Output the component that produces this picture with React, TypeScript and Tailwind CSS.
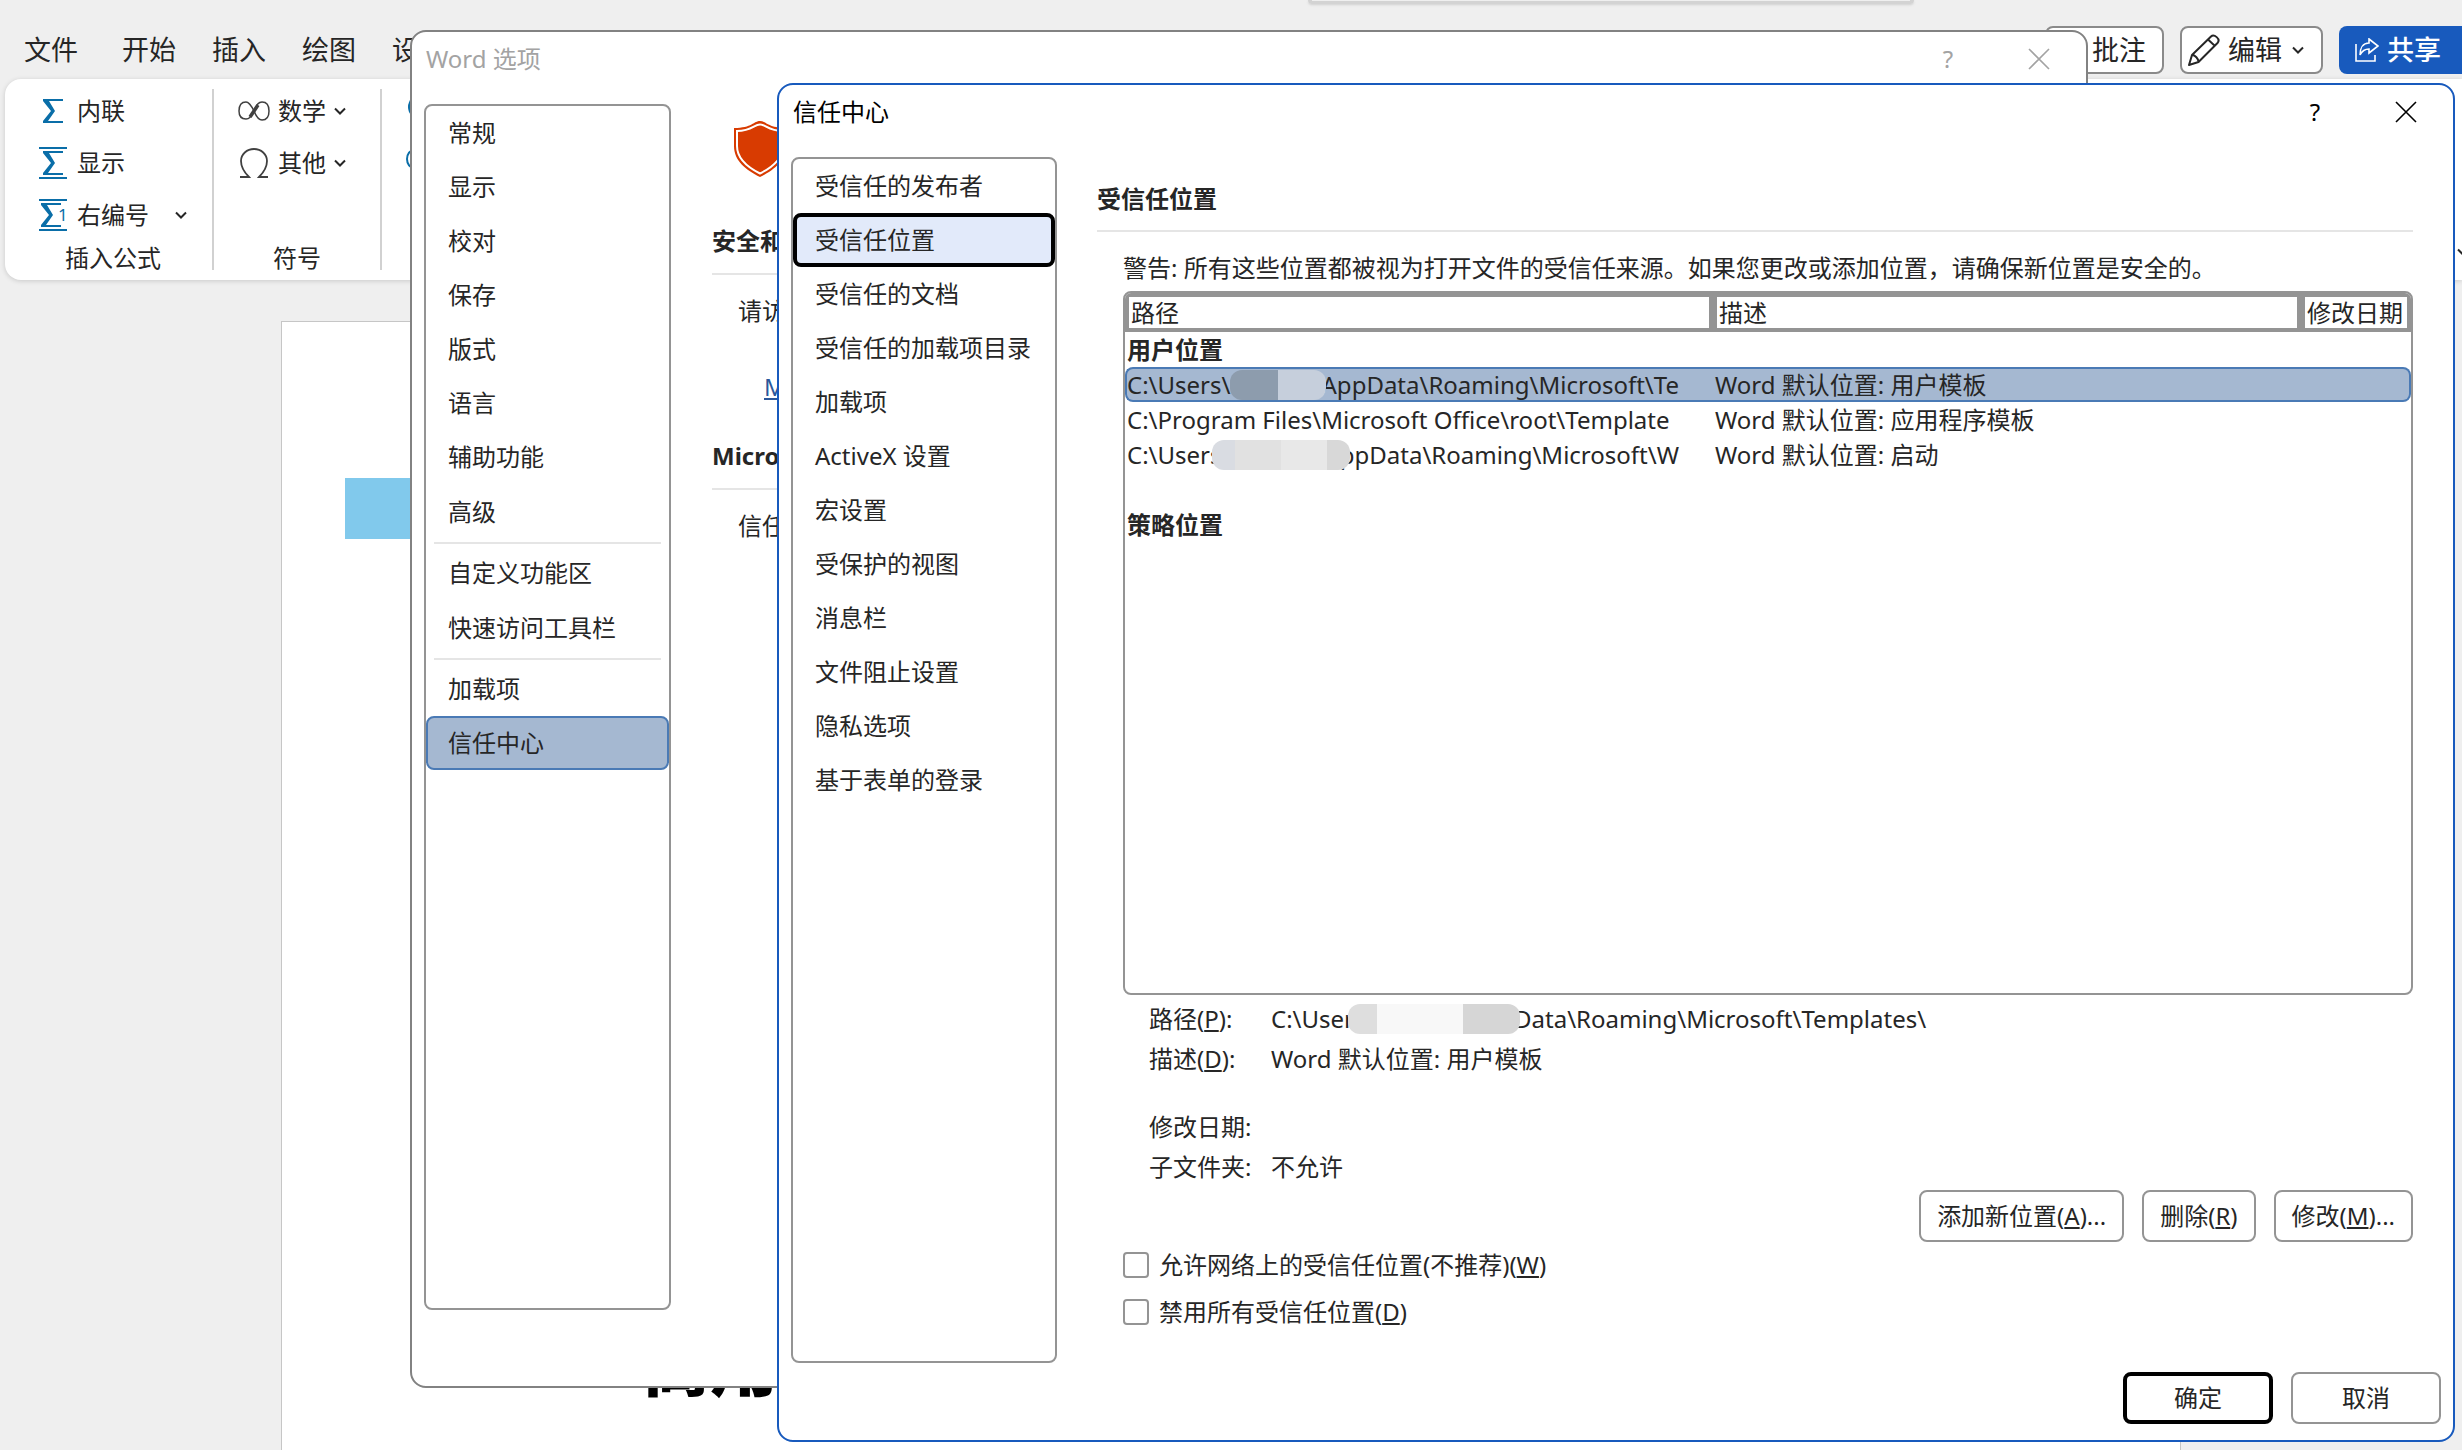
import { useState, type ReactNode } from 'react';

interface NavItem {
  label: string;
  tall?: boolean;
  ruleAfter?: boolean;
}

interface Location {
  head: string;
  tail: string;
  mask: string[];
  maskClass: string;
  description: string;
}

const MENU = ['文件', '开始', '插入', '绘图', '设计'];

const OPTION_NAV: NavItem[] = [
  { label: '常规' },
  { label: '显示' },
  { label: '校对' },
  { label: '保存' },
  { label: '版式' },
  { label: '语言' },
  { label: '辅助功能' },
  { label: '高级', tall: true, ruleAfter: true },
  { label: '自定义功能区' },
  { label: '快速访问工具栏', tall: true, ruleAfter: true },
  { label: '加载项' },
  { label: '信任中心' },
];

const TRUST_NAV = [
  '受信任的发布者', '受信任位置', '受信任的文档', '受信任的加载项目录', '加载项', 'ActiveX 设置',
  '宏设置', '受保护的视图', '消息栏', '文件阻止设置', '隐私选项', '基于表单的登录',
];

const LOCATIONS: Location[] = [
  { head: 'C:\\Users\\', tail: 'AppData\\Roaming\\Microsoft\\Te', mask: ['bg-[#8d9cad]', 'bg-[#c6cfdc]'], maskClass: '-mr-1', description: 'Word 默认位置: 用户模板' },
  { head: 'C:\\Program Files\\Microsoft Office\\root\\Template', tail: '', mask: [], maskClass: '', description: 'Word 默认位置: 应用程序模板' },
  { head: 'C:\\Users', tail: 'ppData\\Roaming\\Microsoft\\W', mask: ['bg-[#d9dce2]', 'bg-[#e1e1e1]', 'bg-[#e1e1e1]', 'bg-[#e8e8e8]', 'bg-[#e8e8e8]', 'bg-[#d8d8d8]'], maskClass: '-ml-[10px] -mr-[10px]', description: 'Word 默认位置: 启动' },
];

function Chevron({ className = '' }: { className?: string }) {
  return (
    <svg viewBox="0 0 12 8" className={`w-3 h-2 shrink-0 ${className}`} fill="none" stroke="#262626" strokeWidth="2">
      <path d="M1 1.5l5 5 5-5" />
    </svg>
  );
}

function Sigma({ framed, numbered }: { framed?: boolean; numbered?: boolean }) {
  return (
    <svg viewBox="0 0 28 32" className="w-7 h-8 shrink-0" fill="#0a6ea8">
      <path transform={numbered ? 'translate(2 4)' : 'translate(4 4)'} d="M0 0H20V2H6L12 12L5 22H20V24H0V22L8 12L0 2Z" />
      {framed && <path d="M0 0H28V2H0ZM0 30H28V32H0Z" />}
      {numbered && <text x="19" y="22" fontSize="17" fontFamily="Noto Sans">1</text>}
    </svg>
  );
}

function Infinity() {
  return (
    <svg viewBox="0 0 32 20" className="w-8 h-5 shrink-0" fill="none" stroke="#404040" strokeWidth="1.5">
      <path d="M16 10C13 4 11 1 8 1C3 1 1 5 1 10C1 15 3 18 8 18C12 18 13 15 16 10C19 4 20 1 24 1C29 1 31 5 31 10C31 15 29 19 24 19C20 19 18 15 16 10Z" />
      <path d="M12 16L20 4" strokeWidth="3.5" />
    </svg>
  );
}

function Omega() {
  return (
    <svg viewBox="0 0 32 30" className="w-8 h-[30px] shrink-0" fill="none" stroke="#404040" strokeWidth="1.8">
      <path d="M2 29H11C6 24 3 19 3 13A13 12 0 0 1 29 13C29 19 26 24 21 29H30" />
    </svg>
  );
}

function Pencil() {
  return (
    <svg viewBox="0 0 32 32" className="w-8 h-8" fill="none" stroke="#262626" strokeWidth="2" strokeLinejoin="round">
      <path d="M1 31L4 21L23 2.5C26-.5 33 5 29.500 9L10.500 28ZM4 21C7 21 10.500 24.500 10.500 28M20 5.500L27 12" />
    </svg>
  );
}

function ShareIcon() {
  return (
    <svg viewBox="0 0 24 24" className="w-6 h-6" fill="none" stroke="white" strokeWidth="1.6">
      <path d="M1 6V23H20V17" />
      <path d="M14 1L23 8L14 15V11C9 11 7 13 5 17C5 10 8 5 14 5Z" />
    </svg>
  );
}

function Shield() {
  return (
    <svg viewBox="0 0 52 56" className="w-[52px] h-14">
      <path fill="#d83b01" d="M26 0C32 0 34 7 52 7V25C52 40 40 49 26 56C12 49 0 40 0 25V7C18 7 20 0 26 0Z" />
      <path fill="#d83b01" stroke="white" strokeWidth="2" d="M26 3.500C32 3.500 34 10 49 10V25C49 38 39 46 26 52.500C13 46 3 38 3 25V10C18 10 20 3.500 26 3.500Z" />
    </svg>
  );
}

function CloseIcon() {
  return (
    <svg viewBox="0 0 22 22" className="w-[22px] h-[22px]" fill="none" stroke="currentColor" strokeWidth="1.6">
      <path d="M1 1L21 21M21 1L1 21" />
    </svg>
  );
}

function TitleBar({ title, className }: { title: string; className: string }) {
  return (
    <div className={`flex items-center h-[54px] pl-[14px] pr-9 shrink-0 ${className}`}>
      <h1>{title}</h1>
      <button aria-label="帮助" className="ml-auto w-6 text-center">?</button>
      <button aria-label="关闭" className="ml-[68px]"><CloseIcon /></button>
    </div>
  );
}

// grey patches laid over the user name part of a path
function Mask({ colors, className }: { colors: string[]; className: string }) {
  return (
    <span className={`relative flex h-[30px] rounded-xl overflow-hidden ${className}`}>
      {colors.map((c, i) => <span key={i} className={`flex-1 ${c}`} />)}
    </span>
  );
}

function Button({ children, className = '' }: { children: ReactNode; className?: string }) {
  return (
    <button className={`h-[52px] rounded-lg bg-white whitespace-nowrap ${className}`}>
      {children}
    </button>
  );
}

function Check({ id, children }: { id: string; children: ReactNode }) {
  return (
    <div className="flex items-center gap-[10px] h-[26px]">
      <input id={id} type="checkbox" className="appearance-none w-[26px] h-[26px] border-2 border-[#949494] rounded bg-white checked:bg-[#185abd]" />
      <label htmlFor={id}>{children}</label>
    </div>
  );
}

function Detail({ label, children }: { label: ReactNode; children?: ReactNode }) {
  return (
    <div className="flex items-center h-10">
      <dt className="w-[122px] shrink-0">{label}</dt>
      <dd className="flex items-center">{children}</dd>
    </div>
  );
}

function WordWindow() {
  return (
    <div className="flex flex-col h-full">
      <div className="h-1 w-[606px] ml-[1308px] shrink-0 border-b-[3px] border-x-4 border-[#d3d3d3] rounded-b-lg shadow" />
      <header className="flex items-center h-[75px] pt-[17px] pl-6 shrink-0 text-[27px]">
        <nav className="flex gap-9">
          {MENU.map((m, i) => <button key={m} className={i === 0 ? 'mr-2' : ''}>{m}</button>)}
        </nav>
        <div className="flex ml-auto">
          <button className="h-12 w-[119px] pr-4 text-right border-2 border-[#8a8a8a] rounded-lg bg-white">批注</button>
          <button className="flex items-center h-12 w-[143px] ml-4 pl-[6px] border-2 border-[#8a8a8a] rounded-lg bg-white">
            <Pencil />
            <span className="ml-2">编辑</span>
            <Chevron className="ml-[10px]" />
          </button>
          <button className="flex items-center gap-2 h-12 w-[123px] ml-4 pl-4 rounded-l-lg bg-[#185abd] text-white font-medium">
            <ShareIcon />
            共享
          </button>
        </div>
      </header>

      <section className="flex h-[201px] ml-[5px] shrink-0 bg-white rounded-l-2xl shadow-[0_1px_5px_rgba(0,0,0,0.16)]">
        <div className="w-[207px] pt-[6px]">
          <button className="flex items-center gap-[10px] h-[52px] pl-[34px]"><Sigma />内联</button>
          <button className="flex items-center gap-[10px] h-[52px] pl-[34px]"><Sigma framed />显示</button>
          <button className="flex items-center gap-[10px] h-[52px] pl-[34px]"><Sigma framed numbered />右编号<Chevron className="ml-4" /></button>
          <p className="pl-[60px] leading-[34px]">插入公式</p>
        </div>
        <div className="w-[2px] my-[10px] bg-[#d1d1d1]" />
        <div className="w-[166px] pt-[6px]">
          <button className="flex items-center gap-2 h-[52px] pl-6"><Infinity />数学<Chevron /></button>
          <button className="flex items-center gap-2 h-[52px] pl-6"><Omega />其他<Chevron /></button>
          <p className="pt-[52px] pl-[59px] leading-[34px]">符号</p>
        </div>
        <div className="w-[2px] my-[10px] bg-[#d1d1d1]" />
        <div className="pt-4 pl-6">
          <svg viewBox="0 0 28 76" className="w-7 h-[76px]" fill="none" stroke="#0a6ea8" strokeWidth="2">
            <circle cx="14" cy="12" r="12" fill="#0a6ea8" stroke="none" />
            <ellipse cx="8" cy="64" rx="7" ry="9" />
          </svg>
        </div>
        <Chevron className="ml-auto self-end mb-6 -mr-[7px]" />
      </section>

      <main className="flex-1 mt-[41px] mx-[281px] pl-[63px] pt-[156px] bg-white border border-b-0 border-[#c6c6c6]">
        <div className="w-[200px] h-[61px] bg-[#81c9ec]" />
        <h2 className="mt-[792px] ml-[297px] text-[68px] leading-[68px] font-black text-black">商用</h2>
      </main>
    </div>
  );
}

function OptionsDialog() {
  return (
    <div className="absolute left-[410px] top-[30px] right-[374px] bottom-[62px] flex flex-col bg-white border-2 border-[#828282] rounded-2xl overflow-hidden">
      <TitleBar title="Word 选项" className="text-[#a3a3a3]" />
      <div className="flex flex-1 mt-[18px] pl-3 pb-[76px] min-h-0">
        <nav className="w-[247px] shrink-0 border-2 border-[#949494] rounded-lg">
          {OPTION_NAV.map(item => (
            <div key={item.label}>
              <button className={`block w-full text-left ${item.tall ? 'h-14' : 'h-[54px]'} ${item.label === '信任中心' ? 'pl-5 bg-[#a5b8d1] border-2 border-[#4a7ab5] rounded-lg' : 'pl-[22px]'}`}>
                {item.label}
              </button>
              {item.ruleAfter && <hr className="mx-2 my-[2px] border-t-2 border-[#e5e5e5]" />}
            </div>
          ))}
        </nav>
        <div className="flex-1 ml-[41px] pt-[17px] pr-10">
          <div className="pl-[22px] h-14"><Shield /></div>
          <h2 className="mt-12 font-bold leading-8">安全和</h2>
          <hr className="mt-4 border-t-2 border-[#e5e5e5]" />
          <p className="mt-5 pl-[26px] leading-8">请访问</p>
          <a href="#privacy" className="block w-fit mt-11 ml-[52px] leading-8 text-[#2b579a] underline">Microsoft</a>
          <h2 className="mt-[37px] font-bold leading-8">Microsoft</h2>
          <hr className="mt-4 border-t-2 border-[#e5e5e5]" />
          <p className="mt-5 pl-[26px] leading-8">信任中心</p>
        </div>
      </div>
    </div>
  );
}

function LocationTable() {
  const [selected, setSelected] = useState(0);

  return (
    <div className="flex-1 ml-[26px] border-2 border-[#949494] rounded-lg overflow-hidden">
      <table className="w-full table-fixed border-separate border-spacing-0 text-left">
        <thead className="bg-[#949494]">
          <tr>
            <th className="p-1 font-normal"><div className="h-[31px] pl-[2px] leading-[31px] bg-white">路径</div></th>
            <th className="p-1 font-normal"><div className="h-[31px] pl-[2px] leading-[31px] bg-white">描述</div></th>
            <th className="w-[110px] p-1 font-normal"><div className="h-[31px] pl-[2px] leading-[31px] bg-white whitespace-nowrap overflow-hidden">修改日期</div></th>
          </tr>
        </thead>
        <tbody>
          <tr><th colSpan={3} className="h-[35px] pl-[2px] leading-[31px] font-bold">用户位置</th></tr>
          {LOCATIONS.map((l, i) => {
            const on = i === selected;
            return (
              <tr key={i} onClick={() => setSelected(i)}>
                <td className={`h-[35px] p-0 ${on ? 'bg-[#a5b8d1] border-2 border-r-0 border-[#4a7ab5] rounded-l-lg' : 'pl-[2px]'}`}>
                  <div className="flex items-center w-[552px] h-[31px] whitespace-nowrap">
                    <span>{l.head}</span>
                    {l.mask.length > 0 && <Mask colors={l.mask} className={`flex-1 ${l.maskClass}`} />}
                    <span>{l.tail}</span>
                  </div>
                </td>
                <td className={`h-[35px] p-0 pl-[2px] leading-[31px] ${on ? 'bg-[#a5b8d1] border-y-2 border-[#4a7ab5]' : ''}`}>{l.description}</td>
                <td className={`h-[35px] p-0 ${on ? 'bg-[#a5b8d1] border-2 border-l-0 border-[#4a7ab5] rounded-r-lg' : ''}`} />
              </tr>
            );
          })}
          <tr><td colSpan={3} className="h-[35px] p-0" /></tr>
          <tr><th colSpan={3} className="h-[35px] pl-[2px] leading-[31px] font-bold">策略位置</th></tr>
        </tbody>
      </table>
    </div>
  );
}

function TrustCenterDialog() {
  const [page, setPage] = useState('受信任位置');

  return (
    <div className="absolute left-[777px] top-[83px] right-[7px] bottom-2 flex flex-col bg-white border-2 border-[#185abd] rounded-2xl">
      <TitleBar title="信任中心" className="text-black" />
      <div className="flex flex-1 mt-[18px] pl-3 pr-10 min-h-0">
        <nav className="w-[266px] shrink-0 border-2 border-[#949494] rounded-lg">
          {TRUST_NAV.map(label => (
            <button key={label} onClick={() => setPage(label)}
              className={`block w-full h-[54px] text-left ${page === label ? 'pl-[18px] bg-[#e2eafa] border-4 border-black rounded-lg' : 'pl-[22px]'}`}>
              {label}
            </button>
          ))}
        </nav>

        <div className="flex flex-col flex-1 ml-10 pb-[38px]">
          <h2 className="h-[73px] pt-[11px] leading-[62px] font-bold">受信任位置</h2>
          <hr className="border-t-2 border-[#e5e5e5]" />
          <p className="h-[59px] pt-[13px] pl-[26px] leading-[46px]">警告: 所有这些位置都被视为打开文件的受信任来源。如果您更改或添加位置，请确保新位置是安全的。</p>
          <LocationTable />
          <dl className="mt-1 pl-[52px]">
            <Detail label={<>路径(<u>P</u>):</>}>
              <span>C:\User</span>
              <Mask colors={['bg-[#dedede]', 'bg-[#f8f8f8]', 'bg-[#f8f8f8]', 'bg-[#f8f8f8]', 'bg-[#d6d6d6]', 'bg-[#d6d6d6]']} className="w-[172px] -mx-[6px]" />
              <span>Data\Roaming\Microsoft\Templates\</span>
            </Detail>
            <Detail label={<>描述(<u>D</u>):</>}>Word 默认位置: 用户模板</Detail>
            <div className="h-7" />
            <Detail label="修改日期:" />
            <Detail label="子文件夹:">不允许</Detail>
          </dl>
          <div className="flex justify-end gap-[18px] mt-[3px]">
            <Button className="px-4 border-2 border-[#949494]">添加新位置(<u>A</u>)...</Button>
            <Button className="px-4 border-2 border-[#949494]">删除(<u>R</u>)</Button>
            <Button className="px-4 border-2 border-[#949494]">修改(<u>M</u>)...</Button>
          </div>
          <div className="flex flex-col gap-[21px] mt-[10px] pl-[26px]">
            <Check id="network">允许网络上的受信任位置(不推荐)(<u>W</u>)</Check>
            <Check id="disable">禁用所有受信任位置(<u>D</u>)</Check>
          </div>
        </div>
      </div>
      <div className="flex justify-end gap-[18px] mt-[9px] pr-3 pb-4">
        <Button className="w-[150px] border-4 border-black">确定</Button>
        <Button className="w-[150px] border-2 border-[#949494]">取消</Button>
      </div>
    </div>
  );
}

export default function App() {
  return (
    <div className="relative h-screen overflow-hidden bg-[#efefef] font-['Noto_Sans','Noto_Sans_CJK_SC',sans-serif] text-2xl text-[#262626]">
      <WordWindow />
      <OptionsDialog />
      <TrustCenterDialog />
    </div>
  );
}
